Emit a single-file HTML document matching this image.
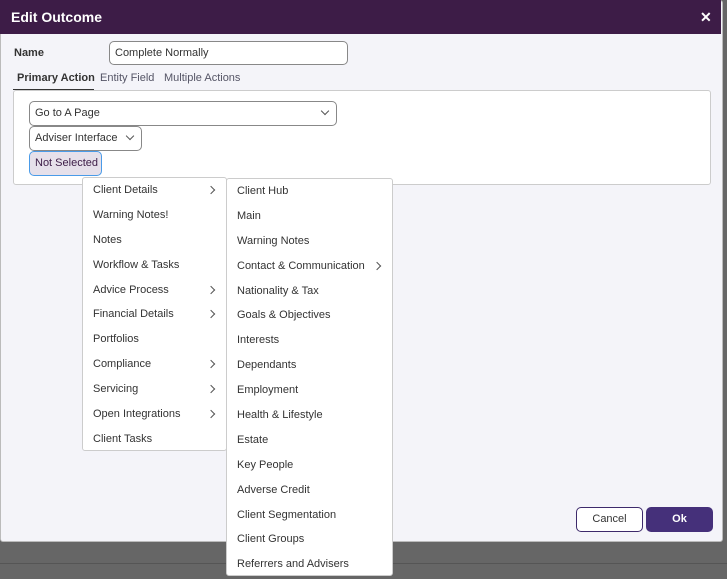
<html><head><style>
body{margin:0;width:727px;height:579px;background:#666;font-family:"Liberation Sans",sans-serif;font-size:11px;color:#333;position:relative;overflow:hidden}
.a{position:absolute}
.dlg{left:0;top:0;width:721px;height:540px;background:#f4f4f9;border:1px solid #bbb;border-radius:3px}
.hd{left:0;top:0;width:721px;height:34px;background:#3d1c47;color:#fff;font-weight:bold;font-size:14px;line-height:34px;text-indent:11px}
.inp{background:#fff;border:1px solid #888;border-radius:5px;box-sizing:border-box;padding-left:5px;line-height:22px}
.menu{background:#fff;border:1px solid #ccc;border-radius:3px;box-sizing:border-box}
.it{height:24.9px;line-height:24.9px;padding-left:10px;position:relative}
.ar::after{content:"";position:absolute;right:12px;top:9px;width:5px;height:5px;border-right:1px solid #555;border-top:1px solid #555;transform:rotate(45deg)}
.ch::after{content:"";position:absolute;right:8px;top:6px;width:5px;height:5px;border-right:1px solid #555;border-bottom:1px solid #555;transform:rotate(45deg)}
</style></head><body>
<div class="a" style="left:0;top:563px;width:727px;height:1px;background:#555"></div>
<div class="a dlg"></div>
<div class="a hd">Edit Outcome</div>
<div class="a" style="left:700px;top:9px;color:#fff;font-size:14px;font-weight:bold">✕</div>
<div class="a" style="left:14px;top:47px;font-weight:bold">Name</div>
<div class="a inp" style="left:109px;top:41px;width:239px;height:24px">Complete Normally</div>
<div class="a" style="left:17px;top:72px;font-weight:bold">Primary Action</div>
<div class="a" style="left:100px;top:72px;color:#556">Entity Field</div>
<div class="a" style="left:164px;top:72px;color:#556">Multiple Actions</div>
<div class="a" style="left:13px;top:89px;width:81px;height:1px;background:#333"></div>
<div class="a" style="left:13px;top:90px;width:698px;height:95px;background:#fff;border:1px solid #ccc;border-radius:3px;box-sizing:border-box"></div>
<div class="a inp ch" style="left:29px;top:101px;width:308px;height:25px;padding-right:0">Go to A Page<span style="position:absolute;right:12px;top:0"></span></div>
<div class="a inp ch" style="left:29px;top:126px;width:113px;height:25px">Adviser Interface</div>
<div class="a inp" style="left:29px;top:151px;width:73px;height:25px;background:#e6e0ea;border-color:#4a9be8;color:#3d1c47">Not Selected</div>
<div class="a menu" style="left:82px;top:177px;width:145px;height:274px;padding-top:0">
<div class="it ar">Client Details</div><div class="it">Warning Notes!</div><div class="it">Notes</div><div class="it">Workflow &amp; Tasks</div><div class="it ar">Advice Process</div><div class="it ar">Financial Details</div><div class="it">Portfolios</div><div class="it ar">Compliance</div><div class="it ar">Servicing</div><div class="it ar">Open Integrations</div><div class="it">Client Tasks</div></div>
<div class="a menu" style="left:226px;top:178px;width:167px;height:398px">
<div class="it">Client Hub</div><div class="it">Main</div><div class="it">Warning Notes</div><div class="it ar">Contact &amp; Communication</div><div class="it">Nationality &amp; Tax</div><div class="it">Goals &amp; Objectives</div><div class="it">Interests</div><div class="it">Dependants</div><div class="it">Employment</div><div class="it">Health &amp; Lifestyle</div><div class="it">Estate</div><div class="it">Key People</div><div class="it">Adverse Credit</div><div class="it">Client Segmentation</div><div class="it">Client Groups</div><div class="it">Referrers and Advisers</div></div>
<div class="a" style="left:576px;top:507px;width:67px;height:25px;border:1px solid #3d2a6b;border-radius:5px;background:#fff;box-sizing:border-box;text-align:center;line-height:23px">Cancel</div>
<div class="a" style="left:646px;top:507px;width:67px;height:25px;border-radius:5px;background:#45307a;color:#fff;font-weight:bold;text-align:center;line-height:25px">Ok</div>
</body></html>
